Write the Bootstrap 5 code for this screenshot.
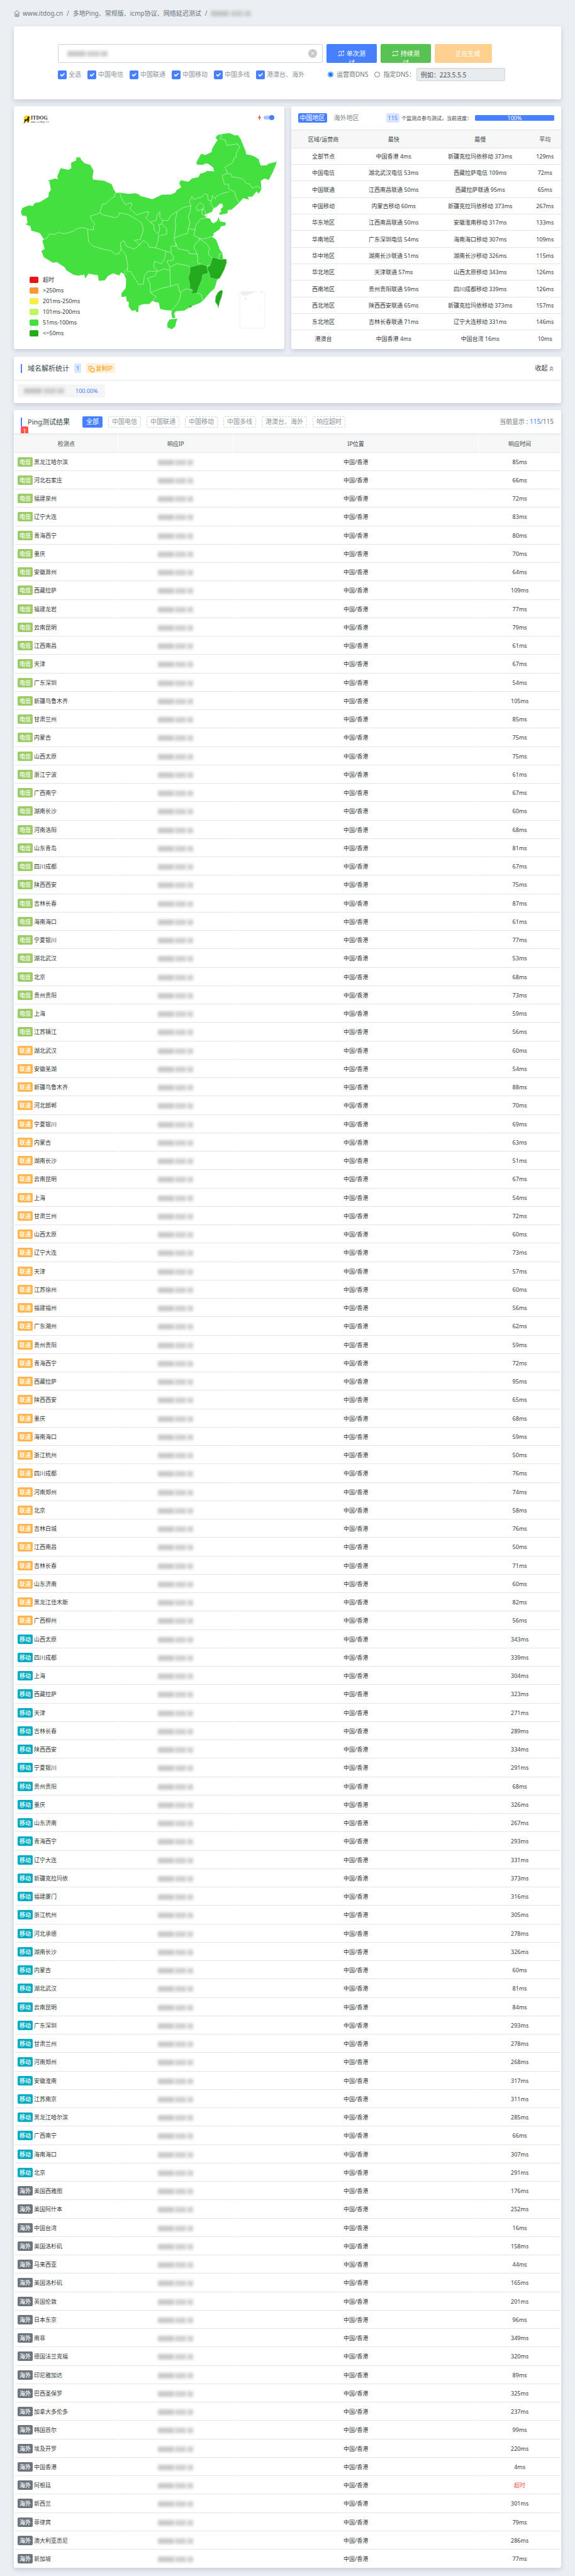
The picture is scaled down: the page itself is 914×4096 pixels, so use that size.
<!DOCTYPE html>
<html lang="zh-CN">
<head>
<meta charset="utf-8">
<meta name="viewport" content="width=device-width, initial-scale=1">
<title>多地Ping - ITDOG</title>
<link href="https://cdn.jsdelivr.net/npm/bootstrap@5.3.0/dist/css/bootstrap.min.css" rel="stylesheet">
<style>
:root{--blue:#4680ff;--line:#e2e6ea;--soft:#f7f7f7;--muted:#8c959d}
body{background:#ebeef3;color:#373a3c;font:10px/15px "Noto Sans","Noto Sans CJK SC",sans-serif;-webkit-text-size-adjust:none}
.page{padding:13px 22px 12px}
.crumbs{height:16px;margin-bottom:13px;font-size:10px;color:#6c757d}
.crumbs a{color:#6c757d;text-decoration:none}
.crumbs .sep{margin:0 6px}
.panel{background:#fff;border-radius:3px;box-shadow:0 3px 7px rgba(69,90,120,.22);margin-bottom:11px;overflow:hidden}
.halves{--bs-gutter-x:11px}
.halves .panel{height:386px;margin-bottom:12px}
/* masked addresses */
.masked{display:inline-block;width:64px;height:9px;filter:blur(2px);vertical-align:middle;
 background:linear-gradient(90deg,#bdbdbd 0 44%,#e6e6e6 44% 50%,#c6c6c6 50% 79%,#e6e6e6 79% 85%,#c4c4c4 85% 100%);opacity:.8}
/* query form */
.query{padding:28px 70px 29px}
.host-box{flex:0 1 421px}
.host-box input{width:100%;height:30px;border:1px solid #cfd3d7;border-radius:2px;padding:0 14px;font-size:10px}
.host-box .masked{position:absolute;left:15px;top:11px}
.host-box button{position:absolute;right:9px;top:8px;width:14px;height:14px;border:0;padding:0;background:none;display:flex}
.act{flex:0 0 80px;height:30px;overflow:hidden;border:0;border-radius:2px;padding:8px 16px 0;font-size:10px;line-height:15px;color:#fff;text-align:center}
.act svg{width:11px;height:10px;vertical-align:-1px}
.act-blue{background:var(--blue)}
.act-green{background:#58c353}
.act-amber{flex-basis:91px;background:#ffd08f;padding:8px 14px 0}
.act-amber i{display:inline-block;width:14px}
.opts{margin-top:8px;height:21px;gap:10px;color:var(--muted)}
.opts .form-check{min-height:0;margin:0;padding:0;gap:3px;display:flex;align-items:center;white-space:nowrap}
.opts .form-check-input{float:none;margin:0;width:14px;height:14px;border-radius:2px}
.opts .form-check-input:checked{background-color:var(--blue);border-color:var(--blue)}
.opts .isp-dns{margin-left:27px}
.opts .dns{color:#6c757d;gap:5px}
.opts .dns input{width:9px;height:9px;margin:0}
.opts .dns-ip{width:141px;height:21px;margin-left:-8px;border:1px solid #cfd3d7;border-radius:2px;background:#e9ecef;padding:0 6px;font-size:10px}
.dns-ip::placeholder{color:#495057;opacity:1}
/* map */
.map svg.china{display:block;width:100%;height:100%}
.brand{position:absolute;left:15px;top:14px;color:#333}
.brand b{display:block;font:8px/8px "Liberation Serif",serif;font-weight:600}
.brand small{display:block;font:4px/4px "Liberation Mono",monospace}
.turbo{position:absolute;right:16px;top:13px;gap:4px}
.turbo input{appearance:none;position:relative;width:17px;height:6px;margin:0;border-radius:3px;background:#a9c3ff}
.turbo input::before{content:"";position:absolute;right:0;top:-1px;width:8px;height:8px;border-radius:50%;background:var(--blue)}
.legend-list{position:absolute;left:25px;bottom:19px;margin:0;padding:0;list-style:none;display:grid;gap:5px;font-size:9px;line-height:12px}
.legend-list li{display:flex;align-items:center;gap:7px}
.legend-list i{width:14px;height:10px;border-radius:2px}
/* regional summary */
.sum-head{height:38px;padding:0 11px;border-bottom:1px solid var(--line)}
.tab{border:0;border-radius:2px;padding:0 3px;background:none;color:#7c868e;font-size:10px;line-height:15px}
.tab.on{background:var(--blue);color:#fff}
.pill{border-radius:2px;background:#dae6ff;color:var(--blue);padding:0 3px;font-size:9px;line-height:15px}
.sum-head .note{font-size:8px;margin:0 5px 0 3px;white-space:nowrap}
.sum-head .progress{flex:0 0 126px;height:9px;border-radius:2px;font-size:9px}
.sum-head .progress-bar{background:var(--blue);line-height:9px}
.grid-table{width:100%;margin:0;table-layout:fixed;border-collapse:separate;border-spacing:0;text-align:center;font-size:9px;line-height:15px}
.grid-table th{background:var(--soft);height:29px;padding:0;border-bottom:1px solid var(--line);color:#37474f;font-weight:400;vertical-align:middle}
.grid-table td{padding:0;border-bottom:1px solid var(--line);vertical-align:middle;white-space:nowrap}
.sum-table td{height:26px}
.sum-table tr:nth-child(3n) td{height:27px}
.grid-table tbody tr:last-child td{border-bottom-color:transparent}
/* section headings */
.sec-head{height:38px;padding:0 12px 0 11px;border-bottom:1px solid var(--line)}
.sec-head h2{margin:0;padding-left:9px;border-left:2px solid var(--blue);font-size:11px;line-height:14px;font-weight:400;color:#37474f}
.copy{border:0;border-radius:2px;background:#fff0dc;color:#ff9800;font-size:9px;line-height:15px;padding:0 4px}
.fold{border:0;background:none;padding:0;font-size:10px;line-height:15px;color:#373a3c}
.ip-box{display:inline-flex;align-items:center;height:21px;margin:6px 0 9px 6px;padding:0 11px 0 10px;gap:18px;background:#f5f5f5;border-radius:2px;font-size:9px;color:var(--blue)}
.chips{gap:9px}
.chip{height:18px;border:1px dashed #ced4da;border-radius:2px;background:#fff;color:var(--muted);font-size:10px;line-height:15px;padding:0 5px}
.chip.on{border:0;background:var(--blue);color:#fff;padding:0 6px}
.mini{position:absolute;left:11px;top:26px;width:12px;border-radius:2px;background:#ff5252;color:#fff;font-size:9px;line-height:15px;text-align:center}
.ping-wrap{padding-top:1px}
.ping-table{border-spacing:1px 0}
.ping-table th{border-top:1px solid #dfe7f0}
.ping-table td{height:29px}
.ping-table tr:nth-child(4n) td{height:30px}
.ping-table td:first-child{text-align:left;padding-left:5px}
.net{display:inline-block;width:24px;margin-right:2px;border-radius:2px;color:#fff;text-align:center;font-weight:500}
.net-t{background:#9ccc65}.net-u{background:#ffb74d}.net-m{background:#00acc1}.net-o{background:#6c757d}
.ping-table .masked{width:56px}
.late{color:#ff5252}
</style>
</head>
<body>
<div class="page">
 <nav class="crumbs d-flex align-items-center" aria-label="breadcrumb">
  <svg width="10" height="11" viewBox="0 0 16 18" fill="none" stroke="#6c757d" stroke-width="1.5"><path d="M1 8 8 1.500l7 6.500M3 7v9.500h10V7M6.500 16v-6h3v6"/></svg>
  <a href="#" class="ms-1">www.itdog.cn</a><span class="sep">/</span>
  <a href="#">多地Ping、常规版、icmp协议、网络延迟测试</a><span class="sep">/</span><span class="masked"></span>
 </nav>

 <form class="panel query" onsubmit="return false">
  <div class="d-flex" style="gap:6px">
   <div class="host-box position-relative">
    <input type="text" aria-label="域名或IP"><span class="masked"></span>
    <button type="button" aria-label="清空"><svg width="14" height="14" viewBox="0 0 14 14"><circle cx="7" cy="7" r="7" fill="#c9c9c9"/><path d="m4.500 4.500 5 5m0-5-5 5" stroke="#fff" fill="none"/></svg></button>
   </div>
   <button class="act act-blue" type="submit"><svg viewBox="0 0 16 14" fill="none" stroke="#fff" stroke-width="1.400"><path d="M2 6V4q0-1.500 1.500-1.500H14M12 0l2.500 2.500L12 5M14 8v2q0 1.500-1.500 1.500H2M4 14l-2.500-2.500L4 9M7 5.500 8.200 5v4.500"/></svg> 单次测试</button>
   <button class="act act-green" type="button"><svg viewBox="0 0 16 14" fill="none" stroke="#fff" stroke-width="1.400"><path d="M2 6V4q0-1.500 1.500-1.500H14M12 0l2.500 2.500L12 5M14 8v2q0 1.500-1.500 1.500H2M4 14l-2.500-2.500L4 9"/></svg> 持续测试</button>
   <button class="act act-amber" type="button"><i></i>正在生成 ...</button>
  </div>
  <div class="opts d-flex align-items-center">
   <label class="form-check"><input class="form-check-input" type="checkbox" checked>全选</label>
   <label class="form-check"><input class="form-check-input" type="checkbox" checked>中国电信</label>
   <label class="form-check"><input class="form-check-input" type="checkbox" checked>中国联通</label>
   <label class="form-check"><input class="form-check-input" type="checkbox" checked>中国移动</label>
   <label class="form-check"><input class="form-check-input" type="checkbox" checked>中国多线</label>
   <label class="form-check"><input class="form-check-input" type="checkbox" checked>港澳台、海外</label>
   <label class="form-check dns isp-dns"><input type="radio" name="dns" checked>运营商DNS</label>
   <label class="form-check dns"><input type="radio" name="dns">指定DNS：</label>
   <input class="dns-ip" type="text" aria-label="DNS地址" placeholder="例如：223.5.5.5" disabled>
  </div>
 </form>

 <div class="row halves">
  <div class="col-6">
   <section class="panel map position-relative">
    <svg class="china" viewBox="74 28 1451 1512" preserveAspectRatio="none" aria-label="中国地图">
     <path fill="#44e040" d="M410 346 430 346 436 362 455 383 485 393 502 430 496 470 500 484 560 492 600 514 610 545 623 569 640 566 690 573 725 570 745 576 752 586 795 600 818 607 870 578 918 577 940 567 950 548 973 533 962 508 970 488 1012 498 1030 477 1065 470 1075 447 1095 442 1112 430 1150 433 1145 410 1120 387 1105 383 1090 392 1060 392 1053 382 1062 360 1080 324 1102 332 1135 314 1140 290 1155 260 1168 240 1157 222 1172 204 1232 194 1262 210 1278 208 1292 232 1305 270 1318 305 1322 328 1345 332 1366 340 1390 358 1392 375 1400 397 1433 395 1440 386 1486 373 1478 400 1466 435 1443 486 1420 477 1400 492 1404 545 1388 572 1378 558 1355 590 1330 592 1337 610 1306 600 1283 630 1245 670 1222 675 1222 694 1182 704 1176 696 1188 682 1184 668 1197 655 1195 635 1180 634 1163 655 1146 663 1138 685 1115 696 1100 704 1108 723 1128 728 1135 748 1146 758 1166 742 1174 716 1180 745 1212 752 1210 770 1186 776 1178 795 1145 820 1148 832 1137 840 1160 858 1172 895 1180 920 1195 945 1196 978 1215 980 1217 1000 1204 1045 1195 1065 1180 1098 1165 1110 1158 1140 1150 1165 1130 1185 1100 1225 1088 1240 1070 1255 1030 1272 990 1300 960 1303 942 1305 935 1320 942 1345 925 1347 920 1320 922 1300 890 1298 860 1290 853 1252 830 1245 818 1240 800 1260 770 1260 745 1270 742 1310 732 1310 728 1298 708 1302 690 1275 692 1248 680 1240 677 1212 652 1217 652 1192 675 1160 677 1105 665 1072 650 1062 640 1082 607 1068 580 1085 562 1112 530 1115 525 1080 495 1075 475 1070 458 1100 452 1077 420 1083 395 1078 355 1048 348 1032 305 998 283 1002 235 968 222 930 240 915 227 868 235 855 213 817 168 803 163 775 137 762 148 755 142 713 118 708 112 685 120 662 155 645 175 650 187 630 213 625 260 592 262 565 273 550 265 498 258 490 297 477 312 482 307 465 325 414 370 424 383 412 381 380 408 366ZM910 1356 953 1350 945 1375 940 1400 922 1417 898 1405 898 1380Z"/>
     <g fill="none" stroke="#d2f7d0">
      <path vector-effect="non-scaling-stroke" stroke-width=".7" d="M235 855 250 852 265 822 295 827 315 810 330 820 355 820 395 805 410 790 445 784 475 795 503 798 500 780 510 762 490 735 485 713 535 692 550 637 568 635 598 602 618 590 615 575 623 569M470 795 475 870 500 900 560 920 597 928 618 950 640 945 650 915 645 880 665 865 680 900 718 917 735 905 750 890 722 862 752 858 765 815 770 795 760 755 735 733 700 710 680 700 640 692 637 710 620 722 555 705 535 692M643 569 655 607 672 640 705 628 708 650 695 665 735 705 765 692 798 684 795 705 782 722 805 750 825 765 828 800 848 825M805 750 838 738 845 700 858 684 858 720 873 738 868 762 852 765 858 795 850 825M868 762 895 790 895 825 850 835 848 870 835 910 800 905 795 885 770 862 755 885 745 895M873 738 900 740 920 705 952 682 940 740 944 770 935 848 945 900 918 898 918 940 890 930 835 910M952 682 985 658 1025 648 1020 690 1010 715 1020 755 1010 790 1008 820 985 826 935 848M1010 790 1048 797 1040 830 1068 850 1070 865 1050 880 1040 905 1060 950 1015 945 1012 928 955 915 945 880M1025 648 1017 620 1030 590 1040 607 1085 592 1100 572 1115 580 1117 612 1130 615 1133 640 1146 663M1052 655 1075 628 1095 645 1090 672 1060 678ZM1085 660 1085 700 1100 712 1103 685 1090 665M1108 723 1075 730 1048 775 1048 797M1068 850 1090 855 1137 840M1172 204 1190 205 1182 230 1208 238 1218 272 1275 262 1287 282 1268 320 1268 345 1257 350 1250 378 1207 408 1222 445M1192 460 1222 445 1240 450 1245 470 1270 470 1305 482 1325 510 1340 512 1355 538 1385 525 1404 545M1192 460 1205 515 1225 512 1230 545 1260 560 1265 590 1280 620 1283 630M1230 560 1195 570 1160 590 1155 605 1140 583 1137 615 1130 615M1068 850 1110 885 1125 910 1118 950 1140 972M1172 978 1180 945 1195 950M1060 950 1062 1005 1080 1012M1110 1022 1128 1018M918 940 932 965 930 985 895 992 912 1030 950 1008 1005 1020 1020 1030M890 930 885 975 865 1010 830 992 825 1030 850 1055 880 1040 912 1050 912 1030M650 915 675 955 685 1010 685 1060 700 1055 745 1140 770 1135 775 1085 795 1055 845 1055 830 1085 790 1100 805 1130 808 1190 865 1162 915 1150 912 1050M685 1035 667 1060 680 1075M915 1150 955 1135 965 1188 1000 1165 1035 1175M808 1190 840 1215 818 1240M972 1190 960 1245 922 1300M1058 1190 1080 1200 1088 1240"/>
     </g>
     <path fill="#24aa1d" stroke="#9be098" stroke-width="2" d="M1020 1030 1080 1012 1110 1022 1117 1055 1115 1068 1088 1078 1085 1105 1065 1160 1058 1190 1025 1196 1035 1175 1018 1160 1018 1130 1010 1095 1020 1065ZM1140 972 1150 970 1180 982 1215 980 1217 1000 1204 1045 1180 1098 1160 1105 1128 1095 1125 1068 1115 1048 1113 1035 1128 1018ZM1188 1172 1196 1180 1190 1215 1180 1245 1172 1284 1168 1268 1155 1245 1158 1212 1172 1185ZM1014 1272 1022 1266 1030 1272 1026 1281 1016 1280Z"/>
     <path fill="none" stroke="#f0f0f0" stroke-width="3" d="M1288 1182H1422V1410H1288Z"/>
     <path fill="#eee" d="M1290 1188 1300 1182H1374L1330 1204 1302 1208ZM1398 1183H1412L1406 1198ZM1316 1220 1326 1218 1320 1235 1310 1230ZM1312 1312 1324 1298 1318 1306ZM1392 1305 1397 1290V1300ZM1368 1355 1379 1336 1374 1346ZM1397 1245 1399 1268 1396 1262ZM1302 1338 1305 1352 1301 1346ZM1410 1215 1420 1198 1415 1210ZM1332 1386 1350 1381 1342 1385Z"/>
    </svg>
    <div class="brand d-flex align-items-center"><svg width="12" height="13" viewBox="0 0 24 26"><circle cx="12" cy="12" r="11" fill="#fdd20c"/><path d="M16 2 17 5 21 7 18 9 18 15 16 24H14L14 17 8 18 6 22 3 26H1L4 20 4 14 12 13 14 8Z" fill="#1d1a12"/></svg><span><b>ITDOG</b><small>www.itdog.cn</small></span></div>
    <label class="turbo d-flex align-items-center"><svg width="5" height="10" viewBox="0 0 5 10"><path d="M3 0 0 6h2L2 10l3-6H3Z" fill="#ff4d4d"/></svg><input type="checkbox" role="switch" aria-label="极速模式" checked></label>
    <ul class="legend-list">
     <li><i style="background:#e81410"></i>超时</li><li><i style="background:#f79a35"></i>&gt;250ms</li><li><i style="background:#f6ee45"></i>201ms-250ms</li><li><i style="background:#bff761"></i>101ms-200ms</li><li><i style="background:#44e040"></i>51ms-100ms</li><li><i style="background:#24aa1d"></i>&lt;=50ms</li>
    </ul>
   </section>
  </div>
  <div class="col-6">
   <section class="panel">
    <div class="sum-head d-flex align-items-center">
     <button class="tab on" type="button">中国地区</button><button class="tab ms-2" type="button">海外地区</button>
     <span class="pill ms-auto">115</span><span class="note">个监测点参与测试，当前进度：</span>
     <div class="progress"><div class="progress-bar" style="width:100%">100%</div></div>
    </div>
    <table class="grid-table sum-table">
     <colgroup><col style="width:24%"><col style="width:28%"><col style="width:36%"><col style="width:12%"></colgroup>
     <thead><tr><th>区域/运营商</th><th>最快</th><th>最慢</th><th>平均</th></tr></thead>
     <tbody>
      <tr><td>全部节点</td><td>中国香港 4ms</td><td>新疆克拉玛依移动 373ms</td><td>129ms</td></tr>
      <tr><td>中国电信</td><td>湖北武汉电信 53ms</td><td>西藏拉萨电信 109ms</td><td>72ms</td></tr>
      <tr><td>中国联通</td><td>江西南昌联通 50ms</td><td>西藏拉萨联通 95ms</td><td>65ms</td></tr>
      <tr><td>中国移动</td><td>内蒙古移动 60ms</td><td>新疆克拉玛依移动 373ms</td><td>267ms</td></tr>
      <tr><td>华东地区</td><td>江西南昌联通 50ms</td><td>安徽淮南移动 317ms</td><td>133ms</td></tr>
      <tr><td>华南地区</td><td>广东深圳电信 54ms</td><td>海南海口移动 307ms</td><td>109ms</td></tr>
      <tr><td>华中地区</td><td>湖南长沙联通 51ms</td><td>湖南长沙移动 326ms</td><td>115ms</td></tr>
      <tr><td>华北地区</td><td>天津联通 57ms</td><td>山西太原移动 343ms</td><td>126ms</td></tr>
      <tr><td>西南地区</td><td>贵州贵阳联通 59ms</td><td>四川成都移动 339ms</td><td>126ms</td></tr>
      <tr><td>西北地区</td><td>陕西西安联通 65ms</td><td>新疆克拉玛依移动 373ms</td><td>157ms</td></tr>
      <tr><td>东北地区</td><td>吉林长春联通 71ms</td><td>辽宁大连移动 331ms</td><td>146ms</td></tr>
      <tr><td>港澳台</td><td>中国香港 4ms</td><td>中国台湾 16ms</td><td>10ms</td></tr>
     </tbody>
    </table>
   </section>
  </div>
 </div>

 <section class="panel">
  <div class="sec-head d-flex align-items-center">
   <h2>域名解析统计</h2><span class="pill ms-2">1</span>
   <button class="copy ms-2" type="button"><svg width="9" height="10" viewBox="0 0 9 10" fill="none" stroke="#ff9800"><path d="M3.500 3.500h5v6h-5zM2 7H.5V.5h5V2"/></svg> 复制IP</button>
   <button class="fold ms-auto" type="button">收起 <svg width="7" height="8" viewBox="0 0 7 8" fill="none" stroke="#373a3c"><path d="m1 4 2.500-3L6 4M1 7.500l2.500-3 2.500 3"/></svg></button>
  </div>
  <div class="ip-box"><span class="masked"></span>100.00%</div>
 </section>

 <section class="panel mb-0">
  <div class="sec-head d-flex align-items-center position-relative overflow-hidden">
   <h2 class="me-3">Ping测试结果</h2><span class="mini">1</span>
   <div class="chips d-flex ms-1">
    <button class="chip on" type="button">全部</button><button class="chip" type="button">中国电信</button><button class="chip" type="button">中国联通</button><button class="chip" type="button">中国移动</button><button class="chip" type="button">中国多线</button><button class="chip" type="button">港澳台、海外</button><button class="chip" type="button">响应超时</button>
   </div>
   <span class="ms-auto" style="color:#6c757d">当前显示 : <span style="color:var(--blue)">115</span>/115</span>
  </div>
  <div class="ping-wrap">
   <table class="grid-table ping-table">
    <colgroup><col style="width:19%"><col style="width:21%"><col style="width:45%"><col style="width:15%"></colgroup>
    <thead><tr><th>检测点</th><th>响应IP</th><th>IP位置</th><th>响应时间</th></tr></thead>
    <tbody id="pings"></tbody>
   </table>
  </div>
 </section>
</div>
<script>
// one entry per carrier: badge class, badge label, "node time" pairs
const results = [
 ['net-t','电信','黑龙江哈尔滨 85,河北石家庄 66,福建泉州 72,辽宁大连 83,青海西宁 80,重庆 70,安徽滁州 64,西藏拉萨 109,福建龙岩 77,云南昆明 79,江西南昌 61,天津 67,广东深圳 54,新疆乌鲁木齐 105,甘肃兰州 85,内蒙古 75,山西太原 75,浙江宁波 61,广西南宁 67,湖南长沙 60,河南洛阳 68,山东青岛 81,四川成都 67,陕西西安 75,吉林长春 87,海南海口 61,宁夏银川 77,湖北武汉 53,北京 68,贵州贵阳 73,上海 59,江苏镇江 56'],
 ['net-u','联通','湖北武汉 60,安徽芜湖 54,新疆乌鲁木齐 88,河北邯郸 70,宁夏银川 69,内蒙古 63,湖南长沙 51,云南昆明 67,上海 54,甘肃兰州 72,山西太原 60,辽宁大连 73,天津 57,江苏徐州 60,福建福州 56,广东潮州 62,贵州贵阳 59,青海西宁 72,西藏拉萨 95,陕西西安 65,重庆 68,海南海口 59,浙江杭州 50,四川成都 76,河南郑州 74,北京 58,吉林白城 76,江西南昌 50,吉林长春 71,山东济南 60,黑龙江佳木斯 82,广西柳州 56'],
 ['net-m','移动','山西太原 343,四川成都 339,上海 304,西藏拉萨 323,天津 271,吉林长春 289,陕西西安 334,宁夏银川 291,贵州贵阳 68,重庆 326,山东济南 267,青海西宁 293,辽宁大连 331,新疆克拉玛依 373,福建厦门 316,浙江杭州 305,河北承德 278,湖南长沙 326,内蒙古 60,湖北武汉 81,云南昆明 84,广东深圳 293,甘肃兰州 278,河南郑州 268,安徽淮南 317,江苏南京 311,黑龙江哈尔滨 285,广西南宁 66,海南海口 307,北京 291'],
 ['net-o','海外','美国西雅图 176,美国阿什本 252,中国台湾 16,美国洛杉矶 158,马来西亚 44,美国洛杉矶 165,英国伦敦 201,日本东京 96,南非 349,德国法兰克福 320,印尼雅加达 89,巴西圣保罗 325,加拿大多伦多 237,韩国首尔 99,埃及开罗 220,中国香港 4,阿根廷 超时,新西兰 301,菲律宾 79,澳大利亚悉尼 286,新加坡 77']
];
document.getElementById('pings').innerHTML = results.map(([cls,label,list]) =>
 list.split(',').map(item => {
  const [node,time] = item.split(' ');
  const cell = time === '超时' ? '<td class="late">超时</td>' : `<td>${time}ms</td>`;
  return `<tr><td><span class="net ${cls}">${label}</span>${node}</td><td><span class="masked"></span></td><td>中国/香港</td>${cell}</tr>`;
 }).join('')).join('');
</script>
<script src="https://cdn.jsdelivr.net/npm/bootstrap@5.3.0/dist/js/bootstrap.bundle.min.js"></script>
</body>
</html>
